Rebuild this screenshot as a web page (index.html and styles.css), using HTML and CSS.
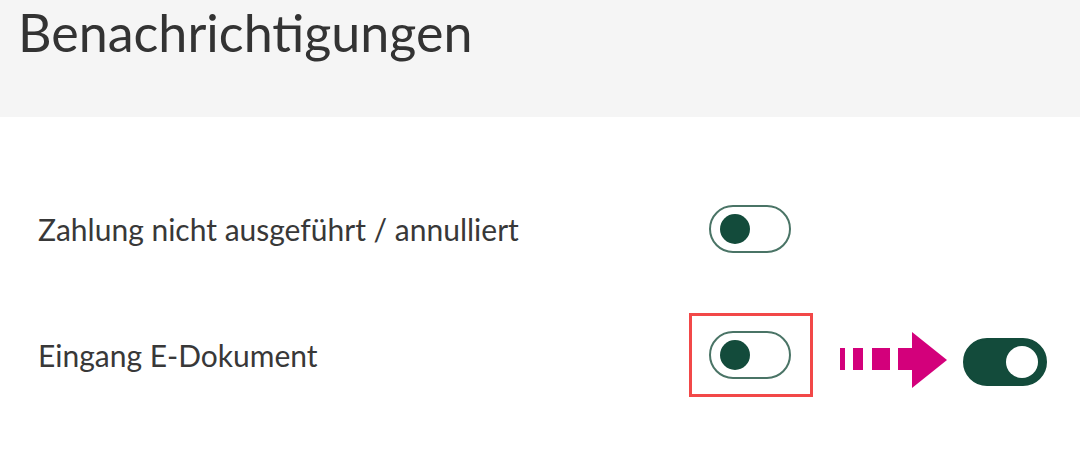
FILE: index.html
```html
<!DOCTYPE html>
<html lang="de">
<head>
    <meta charset="UTF-8">
    <meta name="viewport" content="width=device-width, initial-scale=1.0">
    <title>Benachrichtigungen</title>
    <link rel="stylesheet" href="styles.css">
</head>
<body>
    <header class="page-header">
        <h1>Benachrichtigungen</h1>
    </header>
    <section class="settings">
        <div class="setting-row">
            <span class="setting-label">Zahlung nicht ausgeführt / annulliert</span>
            <div class="toggle-cell">
                <button class="toggle" role="switch" aria-checked="false"></button>
            </div>
        </div>
        <div class="setting-row">
            <span class="setting-label">Eingang E-Dokument</span>
            <div class="toggle-cell highlight">
                <button class="toggle" role="switch" aria-checked="false"></button>
            </div>
            <svg class="hint-arrow" viewBox="0 0 107 56" width="107" height="56" aria-hidden="true">
                <rect x="0" y="16" width="5" height="22"/>
                <rect x="13" y="16" width="10" height="22"/>
                <rect x="32" y="16" width="18" height="22"/>
                <rect x="58" y="16" width="16" height="22"/>
                <polygon points="72,0 107,28 72,56"/>
            </svg>
            <button class="toggle is-on" role="switch" aria-checked="true"></button>
        </div>
    </section>
</body>
</html>
```

FILE: styles.css
```css
body {
    margin: 0;
    font-family: Lato, "Open Sans", sans-serif;
    background-color: #fff;
    color: #3a3a3a;
}
.page-header {
    height: 117px;
    background-color: #f5f5f5;
    box-sizing: border-box;
    padding: 6px 0 0 18px;
}
.page-header h1 {
    margin: 0;
    font-size: 52px;
    font-weight: 400;
    line-height: 1;
    color: #333;
}
.settings {
    padding: 70px 0 0 38px;
    display: flex;
    flex-direction: column;
    gap: 42px;
}
.setting-row {
    display: flex;
    align-items: center;
    min-height: 84px;
}
.setting-label {
    width: 651px;
    font-size: 30px;
    color: #383838;
}
.toggle-cell {
    border: 3px solid transparent;
    padding: 15px 19px 15px 17px;
}
.toggle-cell.highlight {
    border-color: #f24848;
}
.toggle {
    display: block;
    position: relative;
    width: 82px;
    height: 48px;
    padding: 0;
    border: 2px solid #4a7466;
    border-radius: 24px;
    background: #fff;
    cursor: pointer;
}
.toggle::after {
    content: "";
    position: absolute;
    left: 9px;
    top: 50%;
    width: 30px;
    height: 30px;
    margin-top: -15px;
    border-radius: 50%;
    background-color: #134b3b;
}
.toggle.is-on {
    width: 84px;
    border-color: #134b3b;
    background-color: #134b3b;
    margin-top: 14px;
}
.toggle.is-on::after {
    left: auto;
    right: 7px;
    width: 32px;
    height: 32px;
    margin-top: -16px;
    background-color: #fff;
}
.hint-arrow {
    fill: #d3007b;
    margin: 10px 16px 0 27px;
}
```
